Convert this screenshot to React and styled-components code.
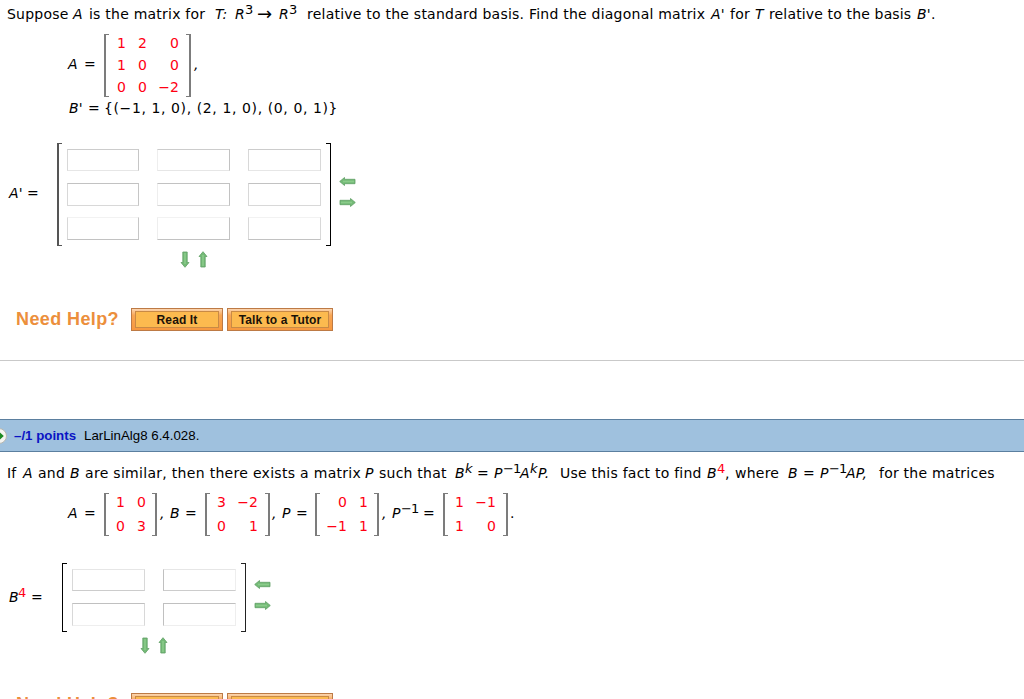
import React from "react";
import styled, { createGlobalStyle } from "styled-components";

const GlobalStyle = createGlobalStyle`
  html, body {
    margin: 0;
    background: #fff;
    overflow: hidden;
  }
`;

const Page = styled.div`
  width: 1024px;
  height: 699px;
  overflow: hidden;
  display: flex;
  flex-direction: column;
  background: #fff;
  color: #000;
  font-family: Verdana, "DejaVu Sans", sans-serif;
  font-size: 14px;
  line-height: 20px;
`;

const Line = styled.div`
  display: flex;
  flex: none;
  height: ${p => p.$h || 20}px;
  margin-top: ${p => p.$top || 0}px;
  padding-left: ${p => p.$left || 0}px;
`;

const Run = styled.span`
  flex: none;
  width: ${p => p.$w}px;
  white-space: pre;
  letter-spacing: ${p => (p.$ls === undefined ? 0.23 : p.$ls)}px;
`;

const Var = styled(Run)`
  font-style: italic;
`;

const To = styled(Run)`
  font-size: 18px;
`;

const Sup = styled(Run)`
  margin-top: -4px;
  font-size: 13px;
  font-style: ${p => (p.$italic ? "italic" : "normal")};
  color: ${p => (p.$red ? "#ff0013" : "inherit")};
`;

const Mid = styled.div`
  display: flex;
  flex: none;
  margin-top: ${p => p.$top}px;
  padding-left: ${p => p.$pad || 0}px;
`;

const Bracketed = styled.div`
  display: flex;
  flex: none;
  width: ${p => p.$w}px;
  height: ${p => p.$h}px;
`;

const Bracket = styled.div`
  box-sizing: border-box;
  flex: none;
  width: 5px;
  border: ${p => p.$t || 2}px solid ${p => p.$color || "#7c7c7c"};
  border-top-width: 1px;
  border-bottom-width: 1px;
  ${p => (p.$close ? "border-left: 0; margin-left: auto;" : "border-right: 0;")}
`;

const Numbers = styled.div`
  display: grid;
  flex: none;
  grid-template-columns: ${p => p.$cols};
  grid-auto-rows: ${p => p.$row}px;
  margin-top: ${p => p.$top || 0}px;
  line-height: ${p => p.$row}px;
  text-align: right;
  color: #ff0013;
  white-space: nowrap;
`;

const Matrix = ({ w, h, cols, row, top, values }) => (
  <Bracketed $w={w} $h={h}>
    <Bracket />
    <Numbers $cols={cols} $row={row} $top={top}>
      {values.map((v, i) => (
        <span key={i}>{v}</span>
      ))}
    </Numbers>
    <Bracket $close />
  </Bracketed>
);

const Answer = styled.div`
  display: flex;
  flex: none;
  height: ${p => p.$h}px;
  margin-top: ${p => p.$top}px;
  padding-left: 9px;
`;

const Fields = styled.div`
  display: grid;
  flex: 1;
  grid-template-columns: ${p => p.$cols};
  grid-template-rows: ${p => p.$rows};
  margin: 6px 5px 0 5px;
  justify-content: space-between;
  align-content: start;
`;

const Field = styled.input`
  box-sizing: border-box;
  width: 100%;
  height: 100%;
  min-width: 0;
  margin: 0;
  padding: 0 3px;
  outline: none;
  border-radius: 0;
  background: #fff;
  border: 1px solid;
  border-color: ${p => p.$tint};
`;

const SideArrows = styled.div`
  display: flex;
  flex-direction: column;
  flex: none;
  gap: 12px;
  margin: ${p => p.$top}px 0 0 ${p => p.$left}px;
`;

const DownUp = styled.div`
  display: flex;
  flex: none;
  gap: 8px;
  height: 17px;
  margin-top: ${p => p.$top}px;
  padding-left: ${p => p.$left}px;
`;

const turns = { left: 180, right: 0, down: 90, up: 270 };

const Arrow = ({ dir }) => {
  const flat = dir === "left" || dir === "right";
  const w = flat ? 17 : 10;
  const h = flat ? 9 : 17;
  return (
    <svg width={w} height={h} viewBox={`${-w / 2} ${-h / 2} ${w} ${h}`}>
      <g transform={`rotate(${turns[dir]})`}>
        <path
          d="M-7.5 -2.2H3V-4L7.8 0L3 4V2.2H-7.5Z"
          fill="#74ba77"
          stroke="#5f9f64"
          strokeWidth="0.8"
          strokeLinejoin="round"
        />
        <path d="M-6.6 0H4.5" stroke="#8acb8a" strokeWidth="1.6" />
      </g>
    </svg>
  );
};

const Help = styled.div`
  display: flex;
  flex: none;
  height: 23px;
  margin-top: ${p => p.$top}px;
  padding-left: 16px;
  font-family: Arial, "Liberation Sans", sans-serif;
`;

const HelpTitle = styled.div`
  width: 115px;
  font-size: 18px;
  font-weight: bold;
  line-height: 23px;
  letter-spacing: 0.4px;
  color: #ec8f3c;
`;

const HelpButton = styled.button`
  box-sizing: border-box;
  flex: none;
  width: ${p => p.$w}px;
  height: 23px;
  margin: 0 ${p => p.$gap || 0}px 0 0;
  padding: 2px 3px;
  border: 1px solid #bd7a45;
  background: linear-gradient(#fbd5b0, #f8a654 30%, #f7983f);
`;

const ButtonFace = styled.span`
  display: block;
  box-sizing: border-box;
  height: 17px;
  border: 1px solid #c98a45;
  background: #fcba4f;
  font: bold 12px/16px Arial, "Liberation Sans", sans-serif;
  letter-spacing: 0.12px;
  color: #1a1208;
  white-space: nowrap;
`;

const NeedHelp = ({ top }) => (
  <Help $top={top}>
    <HelpTitle>Need Help?</HelpTitle>
    <HelpButton $w={92} $gap={4}>
      <ButtonFace>Read It</ButtonFace>
    </HelpButton>
    <HelpButton $w={106}>
      <ButtonFace>Talk to a Tutor</ButtonFace>
    </HelpButton>
  </Help>
);

const Divider = styled.div`
  flex: none;
  height: 1px;
  margin-top: 29px;
  background: #c9c9c9;
`;

const QuestionBar = styled.div`
  box-sizing: border-box;
  display: flex;
  flex: none;
  align-items: center;
  height: 33px;
  margin-top: 58px;
  border-top: 1px solid #5b7f9f;
  border-bottom: 1px solid #5b7f9f;
  background: #9fc1de;
  font-family: Arial, "Liberation Sans", sans-serif;
  font-size: 13.3px;
  white-space: nowrap;
`;

const Points = styled.span`
  width: 70px;
  margin-left: 7px;
  font-weight: bold;
  color: #0a14c4;
`;

const Badge = () => (
  <svg width="7" height="16" viewBox="0 0 7 16">
    <circle cx="-1" cy="8" r="7.5" fill="#f4f4f1" stroke="#b8b8b0" />
    <path d="M-4 6.7H0V4.4L3.8 8L0 11.6V9.3H-4Z" fill="#1c8a22" />
  </svg>
);

const shade = (top, right, bottom, left) => `${top} ${right} ${bottom} ${left}`;

const tints3 = [["#ccc", "#e6e6e6"], ["#c2c2c2", "#d8d8d8"], ["#f2f2f2", "#c2c2c2"]].flatMap(
  ([t, b]) => [shade(t, "#c6c6c6", b, "#d8d8d8"), shade(t, "#c2c2c2", b, "#eee"), shade(t, "#d8d8d8", b, "#d8d8d8")]
);

const tints2 = [["#e6e6e6", "#ccc"], ["#c0c0c0", "#eee"]].flatMap(([t, b]) => [
  shade(t, "#d8d8d8", b, "#d8d8d8"),
  shade(t, "#eee", b, "#c0c0c0")
]);

const App = () => (
  <Page>
    <GlobalStyle />
    <Line $top={4} $left={7}>
      <Run $w={66}>Suppose</Run>
      <Var $w={16}>A</Var>
      <Run $w={126}>is the matrix for</Run>
      <Var $w={20}>T:</Var>
      <Var $w={10}>R</Var>
      <Sup $w={12}>3</Sup>
      <To $w={22}>→</To>
      <Var $w={10}>R</Var>
      <Sup $w={18}>3</Sup>
      <Run $w={404}>relative to the standard basis. Find the diagonal matrix</Run>
      <Var $w={19}>A'</Var>
      <Run $w={25}>for</Run>
      <Var $w={14}>T</Var>
      <Run $w={148} $ls={0.15}>relative to the basis</Run>
      <Var $w={14}>B'</Var>
      <Run $w={5}>.</Run>
    </Line>
    <Line $h={63} $top={10} $left={68}>
      <Mid $top={20}>
        <Var $w={16}>A</Var>
        <Run $w={20}>=</Run>
      </Mid>
      <Matrix
        w={87}
        h={63}
        cols="17px 21px 32px"
        row={22}
        top={-2}
        values={["1", "2", "0", "1", "0", "0", "0", "0", "−2"]}
      />
      <Mid $top={20} $pad={3}>
        <Var $w={8}>,</Var>
      </Mid>
    </Line>
    <Line $top={1} $left={69}>
      <Var $w={19}>B'</Var>
      <Run $w={16}>=</Run>
      <Run $w={240} $ls={0.6}>{"{(−1, 1, 0), (2, 1, 0), (0, 0, 1)}"}</Run>
    </Line>

    <Answer $top={25} $h={103}>
      <Mid $top={40}>
        <Var $w={18}>A'</Var>
        <Run $w={30}>=</Run>
      </Mid>
      <Bracketed $w={274} $h={103}>
        <Bracket $color="#555" />
        <Fields $cols="72px 73px 73px" $rows="22px 12px 23px 11px 23px">
          {[0, 1, 2].map(r =>
            [0, 1, 2].map(c => (
              <Field
                key={`${r}${c}`}
                $tint={tints3[r * 3 + c]}
                style={{ gridRow: r * 2 + 1, gridColumn: c + 1 }}
              />
            ))
          )}
        </Fields>
        <Bracket $close $color="#000" $t={1} />
      </Bracketed>
      <SideArrows $top={34} $left={8}>
        <Arrow dir="left" />
        <Arrow dir="right" />
      </SideArrows>
    </Answer>
    <DownUp $top={5} $left={180}>
      <Arrow dir="down" />
      <Arrow dir="up" />
    </DownUp>
    <NeedHelp top={40} />
    <Divider />

    <QuestionBar>
      <Badge />
      <Points>–/1 points</Points>
      <span>LarLinAlg8 6.4.028.</span>
    </QuestionBar>
    <Line $top={11} $left={7}>
      <Run $w={16}>If</Run>
      <Var $w={15}>A</Var>
      <Run $w={32}>and</Run>
      <Var $w={15}>B</Var>
      <Run $w={280} $ls={0.3}>are similar, then there exists a matrix</Run>
      <Var $w={14}>P</Var>
      <Run $w={76}>such that</Run>
      <Var $w={10}>B</Var>
      <Sup $w={12} $italic>k</Sup>
      <Run $w={17}>=</Run>
      <Var $w={9}>P</Var>
      <Sup $w={17} $ls={-1}>−1</Sup>
      <Var $w={10}>A</Var>
      <Sup $w={8} $italic $ls={0}>k</Sup>
      <Var $w={22}>P.</Var>
      <Run $w={147}>Use this fact to find</Run>
      <Var $w={10}>B</Var>
      <Sup $w={8} $red>4</Sup>
      <Run $w={10}>,</Run>
      <Run $w={53}>where</Run>
      <Var $w={15}>B</Var>
      <Run $w={17}>=</Run>
      <Var $w={9}>P</Var>
      <Sup $w={17} $ls={-1}>−1</Sup>
      <Var $w={33}>AP,</Var>
      <Run $w={116}>for the matrices</Run>
    </Line>
    <Line $h={43} $top={10} $left={68}>
      <Mid $top={10}>
        <Var $w={16}>A</Var>
        <Run $w={20}>=</Run>
      </Mid>
      <Matrix w={53} h={43} cols="16px 21px" row={24} top={-3} values={["1", "0", "0", "3"]} />
      <Mid $top={10} $pad={3}>
        <Var $w={10}>,</Var>
        <Var $w={15}>B</Var>
        <Run $w={20}>=</Run>
      </Mid>
      <Matrix w={65} h={43} cols="16px 32px" row={24} top={-3} values={["3", "−2", "0", "1"]} />
      <Mid $top={10} $pad={2}>
        <Var $w={10}>,</Var>
        <Var $w={14}>P</Var>
        <Run $w={19}>=</Run>
      </Mid>
      <Matrix w={64} h={43} cols="27px 21px" row={24} top={-3} values={["0", "1", "−1", "1"]} />
      <Mid $top={10} $pad={3}>
        <Var $w={10}>,</Var>
        <Var $w={9}>P</Var>
        <Sup $w={22} $ls={-1}>−1</Sup>
        <Run $w={20}>=</Run>
      </Mid>
      <Matrix w={65} h={43} cols="16px 32px" row={24} top={-3} values={["1", "−1", "1", "0"]} />
      <Mid $top={10} $pad={2}>
        <Run $w={8}>.</Run>
      </Mid>
    </Line>

    <Answer $top={27} $h={69}>
      <Mid $top={24}>
        <Var $w={9}>B</Var>
        <Sup $w={13} $red>4</Sup>
        <Run $w={31}>=</Run>
      </Mid>
      <Bracketed $w={184} $h={69}>
        <Bracket $color="#000" $t={1} />
        <Fields $cols="73px 73px" $rows="22px 12px 23px">
          {[0, 1].map(r =>
            [0, 1].map(c => (
              <Field
                key={`${r}${c}`}
                $tint={tints2[r * 2 + c]}
                style={{ gridRow: r * 2 + 1, gridColumn: c + 1 }}
              />
            ))
          )}
        </Fields>
        <Bracket $close $color="#222" $t={1} />
      </Bracketed>
      <SideArrows $top={17} $left={8}>
        <Arrow dir="left" />
        <Arrow dir="right" />
      </SideArrows>
    </Answer>
    <DownUp $top={5} $left={140}>
      <Arrow dir="down" />
      <Arrow dir="up" />
    </DownUp>
    <NeedHelp top={39} />
  </Page>
);

export default App;
